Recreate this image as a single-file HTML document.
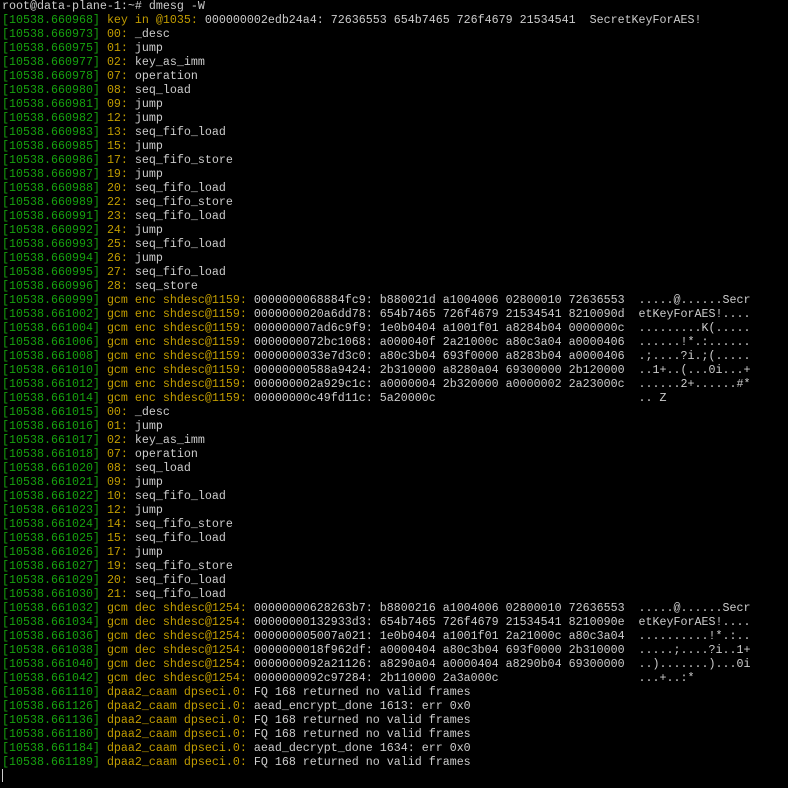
<!DOCTYPE html>
<html><head><meta charset="utf-8"><style>
html,body{margin:0;padding:0;background:#000;width:788px;height:788px;overflow:hidden}
pre{position:absolute;left:2px;top:-1px;margin:0;font-family:"Liberation Mono",monospace;font-size:11.67px;line-height:14px;color:#cccccc;white-space:pre}
.g{color:#16a20e}.y{color:#c19c00}
.cur{display:inline-block;width:1px;height:13px;background:#cccccc;vertical-align:-2px}
</style></head><body><pre>root@data-plane-1:~# dmesg -W
<span class="g">[10538.660968]</span> <span class="y">key in @1035:</span> 000000002edb24a4: 72636553 654b7465 726f4679 21534541  SecretKeyForAES!
<span class="g">[10538.660973]</span> <span class="y">00:</span> _desc
<span class="g">[10538.660975]</span> <span class="y">01:</span> jump
<span class="g">[10538.660977]</span> <span class="y">02:</span> key_as_imm
<span class="g">[10538.660978]</span> <span class="y">07:</span> operation
<span class="g">[10538.660980]</span> <span class="y">08:</span> seq_load
<span class="g">[10538.660981]</span> <span class="y">09:</span> jump
<span class="g">[10538.660982]</span> <span class="y">12:</span> jump
<span class="g">[10538.660983]</span> <span class="y">13:</span> seq_fifo_load
<span class="g">[10538.660985]</span> <span class="y">15:</span> jump
<span class="g">[10538.660986]</span> <span class="y">17:</span> seq_fifo_store
<span class="g">[10538.660987]</span> <span class="y">19:</span> jump
<span class="g">[10538.660988]</span> <span class="y">20:</span> seq_fifo_load
<span class="g">[10538.660989]</span> <span class="y">22:</span> seq_fifo_store
<span class="g">[10538.660991]</span> <span class="y">23:</span> seq_fifo_load
<span class="g">[10538.660992]</span> <span class="y">24:</span> jump
<span class="g">[10538.660993]</span> <span class="y">25:</span> seq_fifo_load
<span class="g">[10538.660994]</span> <span class="y">26:</span> jump
<span class="g">[10538.660995]</span> <span class="y">27:</span> seq_fifo_load
<span class="g">[10538.660996]</span> <span class="y">28:</span> seq_store
<span class="g">[10538.660999]</span> <span class="y">gcm enc shdesc@1159:</span> 0000000068884fc9: b880021d a1004006 02800010 72636553  .....@......Secr
<span class="g">[10538.661002]</span> <span class="y">gcm enc shdesc@1159:</span> 0000000020a6dd78: 654b7465 726f4679 21534541 8210090d  etKeyForAES!....
<span class="g">[10538.661004]</span> <span class="y">gcm enc shdesc@1159:</span> 000000007ad6c9f9: 1e0b0404 a1001f01 a8284b04 0000000c  .........K(.....
<span class="g">[10538.661006]</span> <span class="y">gcm enc shdesc@1159:</span> 0000000072bc1068: a000040f 2a21000c a80c3a04 a0000406  ......!*.:......
<span class="g">[10538.661008]</span> <span class="y">gcm enc shdesc@1159:</span> 0000000033e7d3c0: a80c3b04 693f0000 a8283b04 a0000406  .;....?i.;(.....
<span class="g">[10538.661010]</span> <span class="y">gcm enc shdesc@1159:</span> 00000000588a9424: 2b310000 a8280a04 69300000 2b120000  ..1+..(...0i...+
<span class="g">[10538.661012]</span> <span class="y">gcm enc shdesc@1159:</span> 000000002a929c1c: a0000004 2b320000 a0000002 2a23000c  ......2+......#*
<span class="g">[10538.661014]</span> <span class="y">gcm enc shdesc@1159:</span> 00000000c49fd11c: 5a20000c                             .. Z
<span class="g">[10538.661015]</span> <span class="y">00:</span> _desc
<span class="g">[10538.661016]</span> <span class="y">01:</span> jump
<span class="g">[10538.661017]</span> <span class="y">02:</span> key_as_imm
<span class="g">[10538.661018]</span> <span class="y">07:</span> operation
<span class="g">[10538.661020]</span> <span class="y">08:</span> seq_load
<span class="g">[10538.661021]</span> <span class="y">09:</span> jump
<span class="g">[10538.661022]</span> <span class="y">10:</span> seq_fifo_load
<span class="g">[10538.661023]</span> <span class="y">12:</span> jump
<span class="g">[10538.661024]</span> <span class="y">14:</span> seq_fifo_store
<span class="g">[10538.661025]</span> <span class="y">15:</span> seq_fifo_load
<span class="g">[10538.661026]</span> <span class="y">17:</span> jump
<span class="g">[10538.661027]</span> <span class="y">19:</span> seq_fifo_store
<span class="g">[10538.661029]</span> <span class="y">20:</span> seq_fifo_load
<span class="g">[10538.661030]</span> <span class="y">21:</span> seq_fifo_load
<span class="g">[10538.661032]</span> <span class="y">gcm dec shdesc@1254:</span> 00000000628263b7: b8800216 a1004006 02800010 72636553  .....@......Secr
<span class="g">[10538.661034]</span> <span class="y">gcm dec shdesc@1254:</span> 00000000132933d3: 654b7465 726f4679 21534541 8210090e  etKeyForAES!....
<span class="g">[10538.661036]</span> <span class="y">gcm dec shdesc@1254:</span> 000000005007a021: 1e0b0404 a1001f01 2a21000c a80c3a04  ..........!*.:..
<span class="g">[10538.661038]</span> <span class="y">gcm dec shdesc@1254:</span> 0000000018f962df: a0000404 a80c3b04 693f0000 2b310000  .....;....?i..1+
<span class="g">[10538.661040]</span> <span class="y">gcm dec shdesc@1254:</span> 0000000092a21126: a8290a04 a0000404 a8290b04 69300000  ..).......)...0i
<span class="g">[10538.661042]</span> <span class="y">gcm dec shdesc@1254:</span> 0000000092c97284: 2b110000 2a3a000c                    ...+..:*
<span class="g">[10538.661110]</span> <span class="y">dpaa2_caam dpseci.0:</span> FQ 168 returned no valid frames
<span class="g">[10538.661126]</span> <span class="y">dpaa2_caam dpseci.0:</span> aead_encrypt_done 1613: err 0x0
<span class="g">[10538.661136]</span> <span class="y">dpaa2_caam dpseci.0:</span> FQ 168 returned no valid frames
<span class="g">[10538.661180]</span> <span class="y">dpaa2_caam dpseci.0:</span> FQ 168 returned no valid frames
<span class="g">[10538.661184]</span> <span class="y">dpaa2_caam dpseci.0:</span> aead_decrypt_done 1634: err 0x0
<span class="g">[10538.661189]</span> <span class="y">dpaa2_caam dpseci.0:</span> FQ 168 returned no valid frames
<span class="cur"></span></pre></body></html>
